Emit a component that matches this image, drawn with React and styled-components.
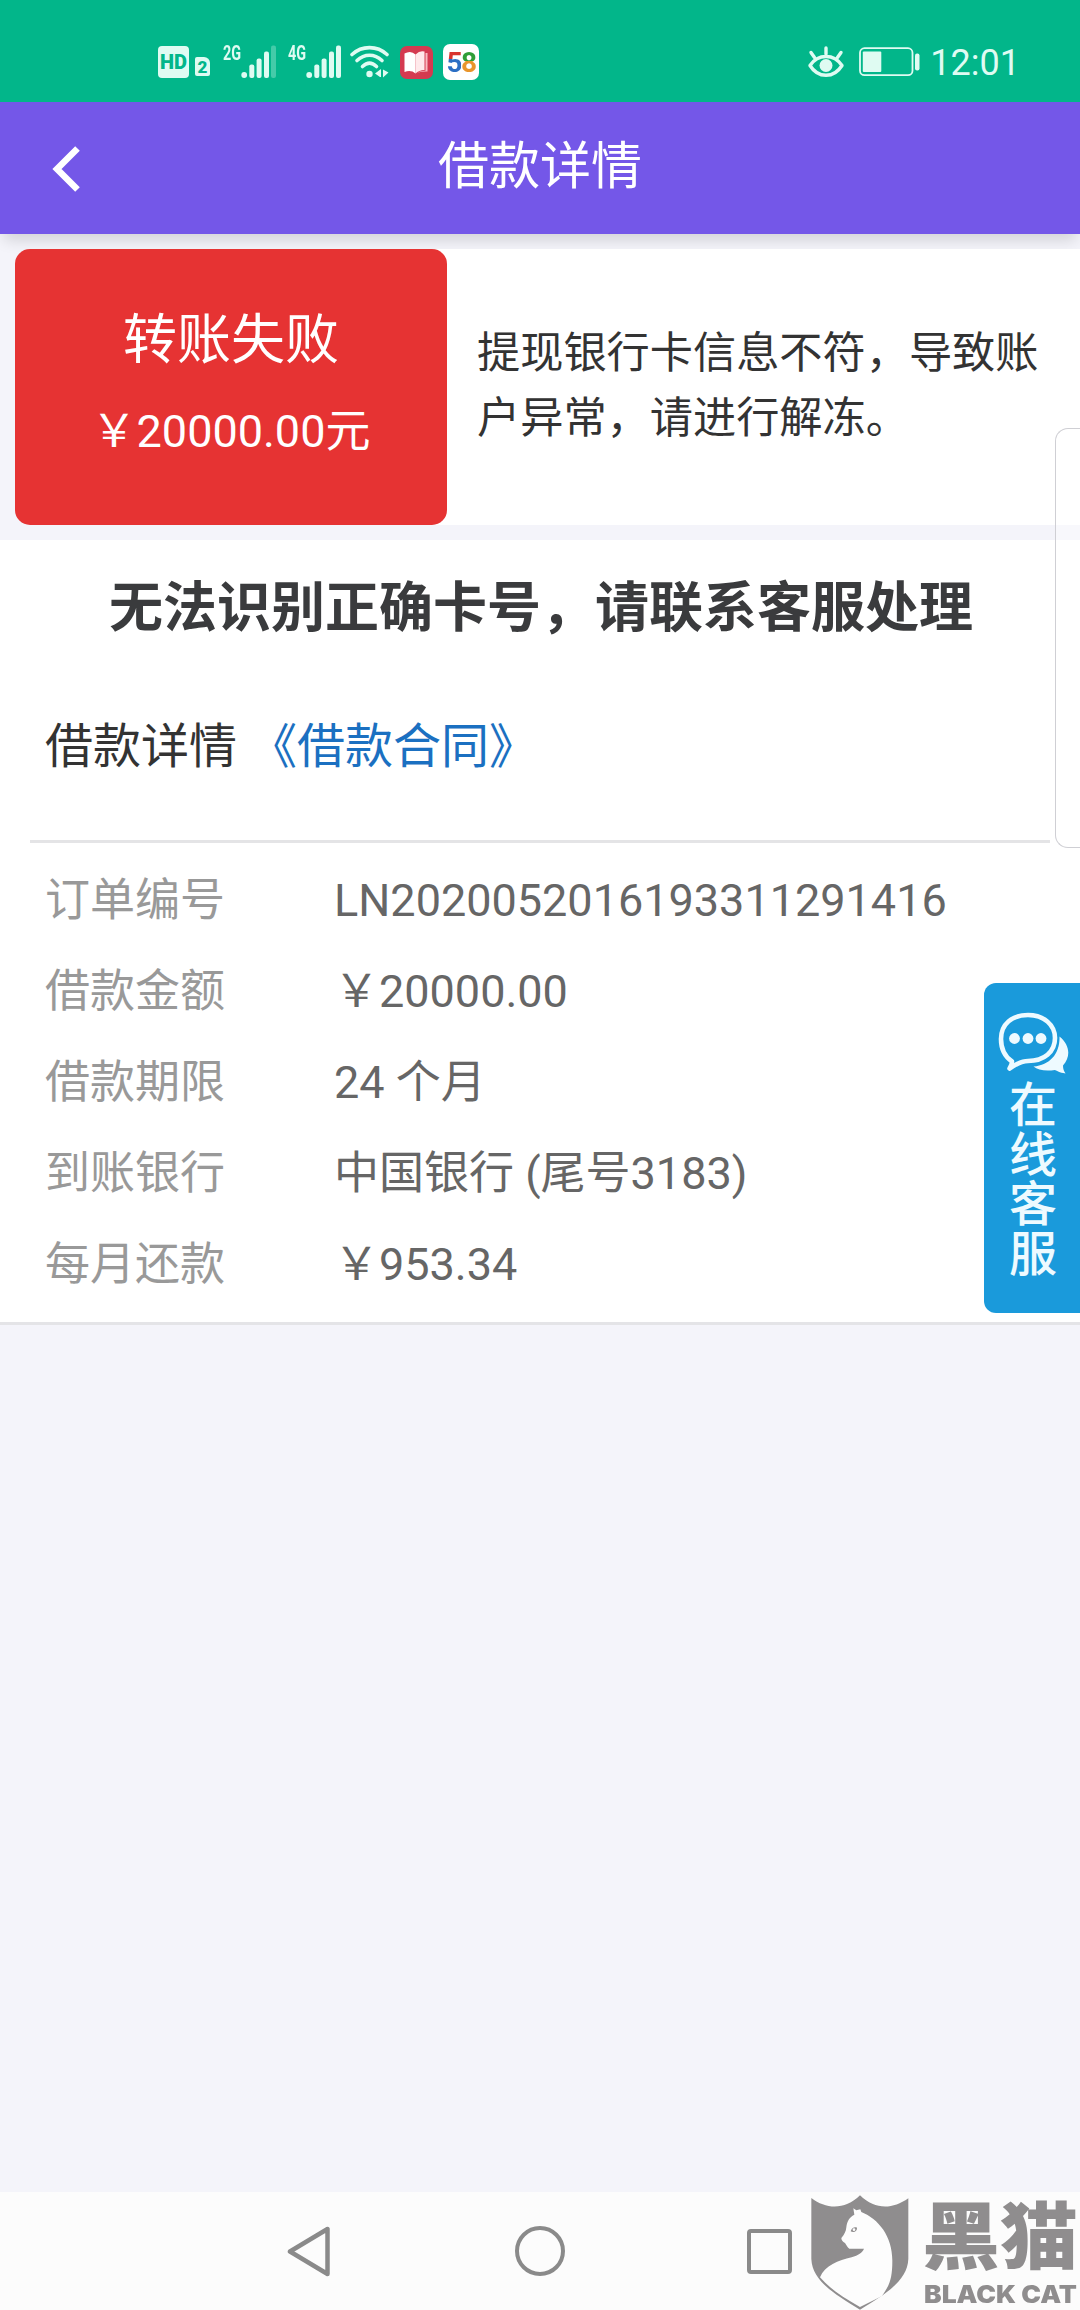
import styled, { createGlobalStyle } from "styled-components";

const rows = [
    { label: "订单编号", value: "LN2020052016193311291416" },
    { label: "借款金额", value: "￥20000.00" },
    { label: "借款期限", value: "24 个月" },
    { label: "到账银行", value: "中国银行 (尾号3183)" },
    { label: "每月还款", value: "￥953.34" },
];

const Signal = ({ weak }) => (
    <svg width="35" height="34" viewBox="0 0 35 34" fill="#dffbf2">
        <circle cx="3.2" cy="30" r="2.9" />
        <rect x="8.3" y="19.5" width="5" height="13.5" rx="2" />
        <rect x="15.6" y="13.5" width="5" height="19.5" rx="2" />
        <rect x="23" y="6.5" width="5" height="26.5" rx="2" />
        <rect x="30" y="0.5" width="5" height="32.5" rx="2" opacity={weak ? 0.3 : 1} />
    </svg>
);

const Wifi = () => (
    <svg width="40" height="34" viewBox="0 0 40 34" fill="none" stroke="#dffbf2" strokeWidth="3.6" strokeLinecap="round">
        <path d="M2 9.5C12 .3 27 .3 37 9.5" />
        <path d="M7 15.5C14.5 8.5 24.5 8.5 32 15.5" />
        <path d="M12.5 21.5C17 17.3 22 17.3 26.5 21.5" />
        <circle cx="19.5" cy="29" r="3.2" fill="#dffbf2" stroke="none" />
        <path d="M31 24v8h-1l-5-3.5zM33 24.5v8l5.500-5z" fill="#dffbf2" stroke="none" />
    </svg>
);

const Book = () => (
    <svg width="33" height="33" viewBox="0 0 33 33">
        <rect width="33" height="33" rx="7" fill="#d43a50" />
        <path d="M4.5 7.5Q11 4 15.5 8.5V27.5Q11 23.5 4.5 26z" fill="#fff" />
        <path d="M15.5 8.5Q20 4 24.5 5.500V24Q19 24 15.5 27.5z" fill="#ffe9eb" />
        <path d="M25.5 7H27.5V25.500Q20 25 16.5 27.5Q20 24.5 25.5 24.8z" fill="#f9b9c0" />
    </svg>
);

const Eye = () => (
    <svg width="38" height="34" viewBox="0 0 38 34" fill="none" stroke="#dffbf2" strokeWidth="3.4" strokeLinecap="round">
        <path d="M3 20.5C11 8.5 27 8.5 35 20.5C27 33.5 11 33.5 3 20.5z" strokeLinejoin="round" />
        <path d="M19 9V3M7.5 12.5L4 7.5M30.5 12.5L34 7.5" />
        <circle cx="19" cy="20.5" r="6.5" fill="#dffbf2" stroke="none" />
    </svg>
);

const Battery = () => (
    <svg width="62" height="30" viewBox="0 0 62 30">
        <rect x="1" y="1.2" width="52.5" height="27" rx="4.5" fill="none" stroke="#dffbf2" strokeWidth="1.8" />
        <rect x="3.8" y="4.5" width="18.5" height="20.5" rx="1" fill="#dffbf2" />
        <rect x="56" y="6.5" width="4.500" height="17" rx="2" fill="#dffbf2" />
    </svg>
);

const Chat = () => (
    <svg width="72" height="62" viewBox="0 0 72 62">
        <path
            d="M14 49.5C6 44 3 36 3 27C3 12 14 3 30 3C46 3 57 13 57 26C57 40 46 49 30 49C25 49 21 50 11.5 56.5C13.5 53.5 14 52 14 49.5z"
            fill="none"
            stroke="#eefaff"
            strokeWidth="4.6"
            strokeLinejoin="round"
        />
        <g fill="#eefaff">
            <circle cx="16.5" cy="26.500" r="5.4" />
            <circle cx="30" cy="26.500" r="5.4" />
            <circle cx="43" cy="26.500" r="5.4" />
            <path d="M61.5 24.5C72 33 73 45 65 53.5C65 57 66 59 67.5 61.5C61 60.5 59.5 59 57 58C47 59.5 40 58 35.5 54.5C52 53 62 42 61.5 24.5z" />
        </g>
    </svg>
);

const CatShield = () => (
    <svg width="100" height="117" viewBox="0 0 300 351">
        <path d="M4 12C50 47 105 48 150 4C195 47 245 48 295 13V195C292 258 235 295 150 347C65 295 7 258 4 195z" fill="#8f8d8e" />
        <path
            d="M130 43L139 49L151 46L154 54C205 75 247 125 247 200C247 255 238 275 215 307L150 339C100 310 60 285 30 250C45 213 85 200 125 190C145 183 157 176 162 164C147 165 132 164 118 164C112 161 109 152 105 147C98 143 94 138 94 132C103 122 108 112 109 100C111 82 118 70 133 62z"
            fill="#fdfdfd"
        />
        <path d="M122 112C125 102 133 98 141 101C142 110 133 117 122 112z" fill="#8f8d8e" />
        <circle cx="132" cy="107" r="4" fill="#fdfdfd" />
    </svg>
);

const App = () => {
    return (
        <Page>
            <GlobalStyle />
            <StatusBar>
                <HdBadge>HD</HdBadge>
                <SimBadge>2</SimBadge>
                <Network>2G</Network>
                <Signal weak />
                <Network $second>4G</Network>
                <Signal />
                <WifiWrap>
                    <Wifi />
                </WifiWrap>
                <Book />
                <AppBadge>
                    <Digit>5</Digit>
                    <Digit $split>8</Digit>
                </AppBadge>
                <StatusRight>
                    <Eye />
                    <Battery />
                    <Clock>12:01</Clock>
                </StatusRight>
            </StatusBar>

            <Header>
                <Back>
                    <svg width="28" height="46" viewBox="0 0 28 46" fill="none" stroke="#fff" strokeWidth="6.5">
                        <path d="M25.5 2.5L5 23L25.5 43.5" />
                    </svg>
                </Back>
                <Title>借款详情</Title>
            </Header>

            <Notice>
                <StatusCard>
                    <StatusText>转账失败</StatusText>
                    <Amount>￥20000.00元</Amount>
                </StatusCard>
                <Message>提现银行卡信息不符，导致账户异常，请进行解冻。</Message>
            </Notice>

            <Detail>
                <Warning>无法识别正确卡号，请联系客服处理</Warning>
                <Contract>
                    借款详情 <ContractLink>《借款合同》</ContractLink>
                </Contract>
                <List>
                    {rows.map((row) => (
                        <Row key={row.label}>
                            <Label>{row.label}</Label>
                            <Value>{row.value}</Value>
                        </Row>
                    ))}
                </List>
            </Detail>

            <NavBar>
                <svg width="44" height="51" viewBox="0 0 44 51" fill="none" stroke="#8a8a8a" strokeWidth="4.5" strokeLinejoin="round">
                    <path d="M40.5 3V48L3 25.5z" />
                </svg>
                <NavHome />
                <NavRecent />
            </NavBar>

            <SidePanel />
            <Service>
                <Chat />
                <ServiceText>在线客服</ServiceText>
            </Service>
            <Watermark>
                <CatShield />
                <Brand>
                    <BrandName>黑猫</BrandName>
                    <BrandLatin>BLACK CAT</BrandLatin>
                </Brand>
            </Watermark>
        </Page>
    );
};

const GlobalStyle = createGlobalStyle`
    * {
        box-sizing: border-box;
    }
    body {
        margin: 0;
        font-family: Roboto, "Noto Sans CJK SC", sans-serif;
    }
    svg {
        display: block;
        flex-shrink: 0;
    }
`;

const Page = styled.div`
    position: relative;
    display: flex;
    flex-direction: column;
    width: 1080px;
    height: 2310px;
    overflow: hidden;
    background: #f4f4fa;
`;

const StatusBar = styled.div`
    display: flex;
    align-items: center;
    height: 102px;
    padding: 22px 60px 0 158px;
    background: #02b68a;
    color: #dffbf2;
`;

const HdBadge = styled.div`
    width: 31px;
    height: 32px;
    border-radius: 4px;
    background: #dffbf2;
    color: #02b68a;
    font-size: 20px;
    font-weight: 900;
    line-height: 32px;
    text-align: center;
`;

const SimBadge = styled.div`
    width: 15px;
    height: 19px;
    margin: 8px 0 0 6px;
    border-radius: 2px 6px 2px 2px;
    background: #dffbf2;
    color: #02b68a;
    font-size: 17px;
    font-weight: 900;
    line-height: 20px;
    text-align: center;
`;

const Network = styled.div`
    width: 18px;
    height: 34px;
    margin-left: ${(props) => (props.$second ? "12px" : "13px")};
    font-family: Roboto, sans-serif;
    font-size: 20px;
    font-weight: 700;
    line-height: 16px;
    transform: scaleX(0.72);
    transform-origin: left;
`;

const WifiWrap = styled.div`
    margin: 0 10px 0 9px;
`;

const AppBadge = styled.div`
    display: flex;
    justify-content: center;
    width: 36px;
    height: 36px;
    margin-left: 10px;
    border-radius: 7px;
    background: #fff;
    font-size: 28px;
    font-weight: 700;
    letter-spacing: -1.5px;
    line-height: 37px;
`;

const Digit = styled.span`
    color: transparent;
    background: ${(props) =>
        props.$split
            ? "linear-gradient(#2f9e37 48%, #e9952b 48%)"
            : "linear-gradient(#d9352f 42%, #2b6fc4 42%)"};
    background-clip: text;
`;

const StatusRight = styled.div`
    display: flex;
    align-items: center;
    gap: 14px;
    margin-left: auto;
`;

const Clock = styled.div`
    margin: 2px 0 0 -5px;
    font-size: 36px;
    line-height: 42px;
`;

const Header = styled.div`
    display: flex;
    align-items: center;
    height: 132px;
    background: #7457e8;
    box-shadow: 0 10px 14px -4px rgba(0, 0, 0, 0.14);
    color: #fff;
`;

const Back = styled.div`
    width: 130px;
    padding-left: 52px;
    padding-top: 2px;
`;

const Title = styled.div`
    flex: 1;
    margin-right: 130px;
    padding-bottom: 2px;
    font-size: 51px;
    line-height: 74px;
    text-align: center;
`;

const Notice = styled.div`
    display: flex;
    height: 276px;
    margin: 15px 0 15px 15px;
    background: linear-gradient(90deg, transparent 420px, #fff 420px);
`;

const StatusCard = styled.div`
    width: 432px;
    padding-top: 52px;
    border-radius: 15px;
    background: #e63333;
    color: #fff;
    text-align: center;
`;

const StatusText = styled.div`
    font-size: 54px;
    line-height: 80px;
`;

const Amount = styled.div`
    margin-top: 17px;
    font-size: 45px;
    line-height: 68px;
`;

const Message = styled.div`
    flex: 1;
    padding: 73px 30px 0;
    font-size: 43.2px;
    line-height: 64.8px;
    color: #333;
`;

const Detail = styled.div`
    height: 785px;
    border-bottom: 3px solid #e4e4e7;
    background: #fff;
`;

const Warning = styled.div`
    padding: 29px 0 0 2px;
    color: #3a3b3d;
    font-size: 54px;
    font-weight: 700;
    line-height: 80px;
    text-align: center;
`;

const Contract = styled.div`
    height: 194px;
    margin: 0 30px;
    padding: 62px 15px 0;
    border-bottom: 3px solid #e4e4e6;
    color: #333;
    font-size: 48px;
    line-height: 72px;
`;

const ContractLink = styled.span`
    color: #1b70c1;
`;

const List = styled.div`
    padding: 12px 45px 0;
`;

const Row = styled.div`
    display: flex;
    height: 91px;
    font-size: 45px;
    line-height: 91px;
`;

const Label = styled.div`
    width: 289px;
    color: #999;
`;

const Value = styled.div`
    color: #666;
`;

const NavBar = styled.div`
    display: flex;
    align-items: center;
    height: 118px;
    margin-top: auto;
    padding-left: 287px;
    background: #fcfcfc;
`;

const NavHome = styled.div`
    width: 50px;
    height: 50px;
    margin: 0 182px 0 184px;
    border: 4.5px solid #8a8a8a;
    border-radius: 50%;
`;

const NavRecent = styled.div`
    width: 45px;
    height: 45px;
    border: 4px solid #8a8a8a;
    border-radius: 4px;
`;

const SidePanel = styled.div`
    position: absolute;
    top: 428px;
    right: 0;
    width: 25px;
    height: 420px;
    border: 1px solid #cfcfd4;
    border-right: 0;
    border-radius: 13px 0 0 13px;
    background: rgba(255, 255, 255, 0.4);
`;

const Service = styled.div`
    position: absolute;
    top: 983px;
    right: 0;
    width: 96px;
    height: 330px;
    padding: 29px 0 0 14px;
    border-radius: 12px 0 0 12px;
    background: #1a9adb;
`;

const ServiceText = styled.div`
    width: 50px;
    margin: 7px 0 0 11px;
    color: #eefaff;
    font-size: 48px;
    font-weight: 500;
    line-height: 49.5px;
    word-break: break-all;
`;

const Watermark = styled.div`
    position: absolute;
    right: 0;
    bottom: 0;
    display: flex;
    width: 270px;
    height: 116px;
    color: #8f8d8e;
`;

const Brand = styled.div`
    width: 158px;
    margin-left: 12px;
`;

const BrandName = styled.div`
    height: 88px;
    font-size: 78px;
    font-weight: 900;
    line-height: 90px;
    white-space: nowrap;
    transform: scaleY(0.93);
`;

const BrandLatin = styled.div`
    margin-left: 2px;
    font-family: Inter, sans-serif;
    font-size: 24px;
    font-weight: 900;
    line-height: 26px;
    white-space: nowrap;
    transform: scaleX(1.1);
    transform-origin: left;
`;

export default App;
